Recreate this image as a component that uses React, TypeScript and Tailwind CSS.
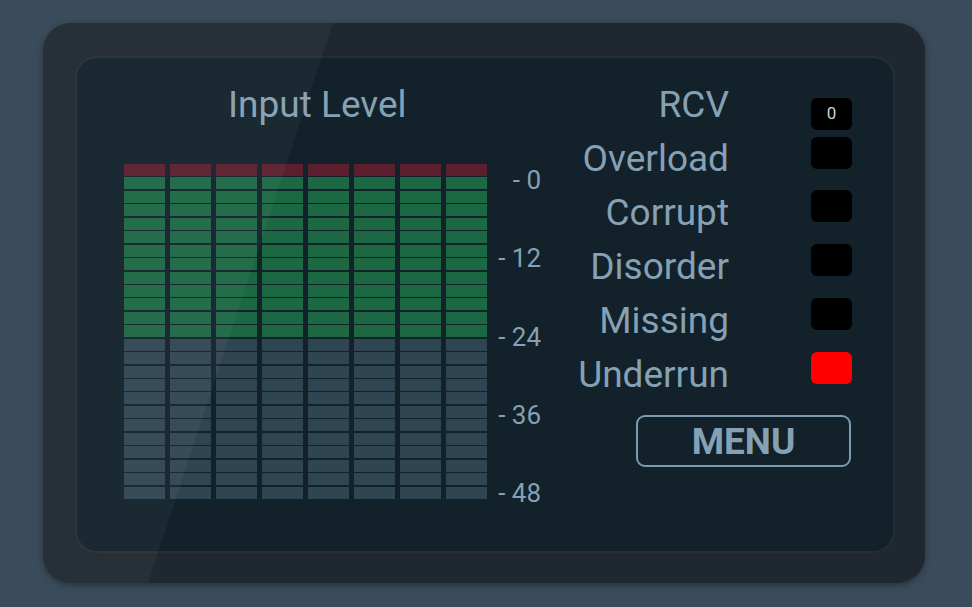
import React from 'react';

const ROWS = 25;
const COLS = 8;

function segColor(i: number) {
  if (i === 0) return 'bg-[#5c1f2d]';
  if (i <= 12) return 'bg-[#1b6843]';
  return 'bg-[#2f4552]';
}

const flags = [
  { label: 'RCV', box: 'bg-black', mt: 'mt-[20px]', value: '0' },
  { label: 'Overload', box: 'bg-black', mt: 'mt-[5px]' },
  { label: 'Corrupt', box: 'bg-black', mt: 'mt-[4px]' },
  { label: 'Disorder', box: 'bg-black', mt: 'mt-[4px]' },
  { label: 'Missing', box: 'bg-black', mt: 'mt-[4px]' },
  { label: 'Underrun', box: 'bg-[#ff0000]', mt: 'mt-[4px]' },
];

export default function App() {
  return (
    <div
      className="w-[972px] h-[607px] bg-[#3a4b5b] pt-[23px] pl-[43px] overflow-hidden"
      style={{ fontFamily: 'Roboto, "Noto Sans", sans-serif' }}
    >
      <div className="relative w-[882px] h-[560px] rounded-[28px] bg-[#1f282e] pt-[35px] pl-[34px] overflow-hidden shadow-[0_2px_6px_rgba(0,0,0,0.35)]">
        <div className="w-[816px] h-[493px] rounded-[20px] bg-[#12212a] shadow-[0_0_0_2px_#252e34] flex pt-[20px] pl-[47px] text-[#86a0b4]">
          {/* left: meter */}
          <div className="flex flex-col">
            <div className="text-[37px] leading-[54px] ml-[104px]">Input Level</div>
            <div className="flex mt-[32px]">
              <div className="flex gap-[5px]">
                {Array.from({ length: COLS }).map((_, c) => (
                  <div key={c} className="flex flex-col gap-[1.45px]">
                    {Array.from({ length: ROWS }).map((_, r) => (
                      <div key={r} className={`w-[41px] h-[12px] ${segColor(r)}`} />
                    ))}
                  </div>
                ))}
              </div>
              <div className="w-[54px] h-[337px] mt-[4px] flex flex-col justify-between text-right text-[26px] leading-[24px]">
                <div>- 0</div>
                <div>- 12</div>
                <div>- 24</div>
                <div>- 36</div>
                <div>- 48</div>
              </div>
            </div>
          </div>

          {/* right: status flags */}
          <div className="flex flex-col">
            {flags.map((f) => (
              <div key={f.label} className="flex h-[54px]">
                <div className="w-[188px] text-right text-[37px] leading-[54px]">{f.label}</div>
                <div
                  className={`ml-[82px] w-[41px] h-[32px] rounded-[6px] ${f.box} ${f.mt} flex items-center justify-center text-[17px] text-[#c9d5de]`}
                >
                  {f.value}
                </div>
              </div>
            ))}
            <button className="mt-[13px] ml-[95px] w-[215px] h-[52px] rounded-[9px] border-2 border-[#7f99ad] text-[37px] font-bold leading-none text-[#86a0b4] flex items-center justify-center">
              MENU
            </button>
          </div>
        </div>

        {/* glass glare */}
        <div className="absolute inset-0 pointer-events-none bg-white/[0.04] [clip-path:polygon(0_0,290px_0,105px_100%,0_100%)]" />
      </div>
    </div>
  );
}
